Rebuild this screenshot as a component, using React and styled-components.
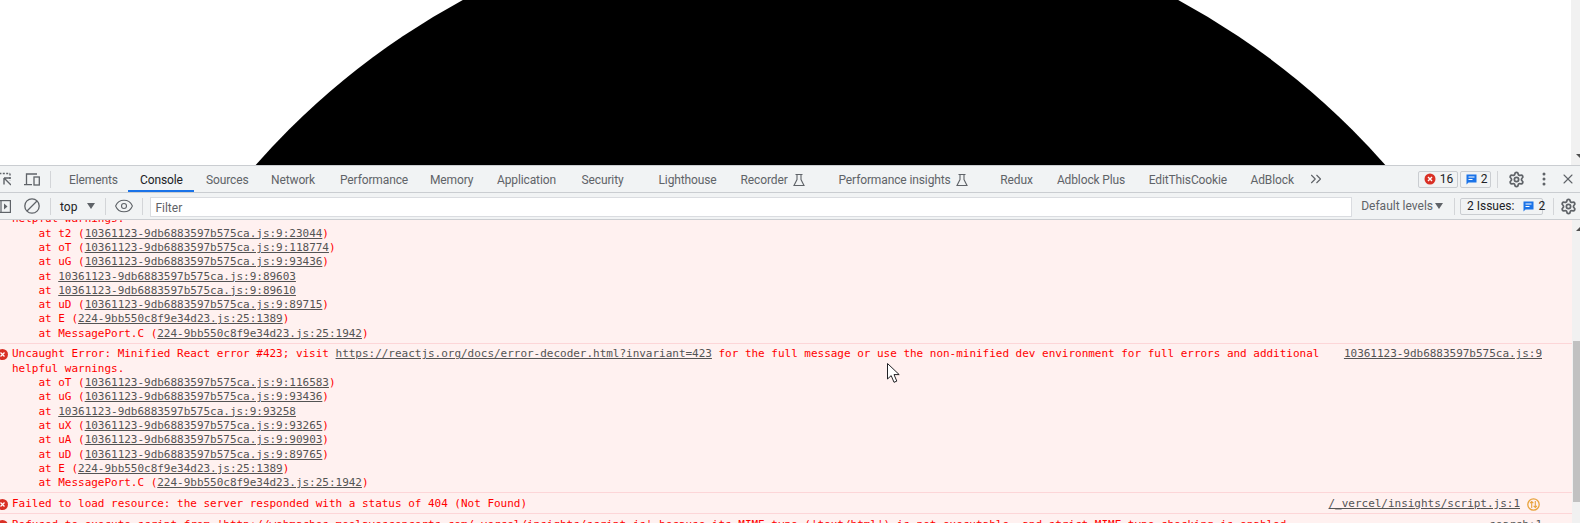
import React from "react";
import styled, { createGlobalStyle } from "styled-components";
import { Eye, Settings, X, ChevronsRight } from "lucide-react";

const GlobalStyle = createGlobalStyle`
  html, body {
    margin: 0;
    padding: 0;
    background: #fff;
    overflow: hidden;
  }
`;

const Page = styled.div`
  width: 1580px;
  height: 523px;
  position: relative;
  overflow: hidden;
  display: flex;
  flex-direction: column;
  font-family: Roboto, "Liberation Sans", sans-serif;
  font-size: 12px;
  color: #5f6368;
`;

const Hero = styled.div`
  height: 165px;
  display: flex;
  flex: none;
`;

const HeroCanvas = styled.svg`
  display: block;
  flex: 1;
  height: 165px;
`;

const Track = styled.div`
  width: ${(p) => p.$w}px;
  flex: none;
  background: #f1f1f1;
  overflow: hidden;
  display: flex;
  flex-direction: column;
`;

const DownArrow = styled.div`
  margin: auto 0 7px 5px;
  width: 0;
  height: 0;
  border-left: 4px solid transparent;
  border-right: 4px solid transparent;
  border-top: 4px solid #505050;
`;

const UpArrow = styled.div`
  margin: 7px 0 0 4px;
  width: 0;
  height: 0;
  border-left: 4px solid transparent;
  border-right: 4px solid transparent;
  border-bottom: 4px solid #505050;
`;

const Thumb = styled.div`
  margin-top: 110px;
  height: 161px;
  background: #c1c1c1;
  margin-left: 1px;
`;

const Bar = styled.div`
  height: 27px;
  box-sizing: border-box;
  flex: none;
  display: flex;
  align-items: center;
  background: #f1f3f4;
  border-bottom: 1px solid #cacdd1;
  ${(p) => p.$top && "border-top: 1px solid #cacdd1; height: 28px;"}
`;

const Slot = styled.span`
  display: flex;
  flex: none;
  margin-left: ${(p) => p.$ml || 0}px;
`;

const Divider = styled.span`
  flex: none;
  width: 1px;
  height: 17px;
  background: #d3d5d8;
  margin-left: ${(p) => p.$ml || 0}px;
`;

const Tab = styled.div`
  flex: none;
  width: ${(p) => p.$w}px;
  height: 26px;
  box-sizing: border-box;
  padding: 4px 0 0 12px;
  display: flex;
  align-items: center;
  gap: 5px;
  white-space: nowrap;
  letter-spacing: -0.12px;
  color: ${(p) => (p.$active ? "#202124" : "#5f6368")};
  border-bottom: 2px solid ${(p) => (p.$active ? "#1a73e8" : "transparent")};
`;

const CountBox = styled.div`
  flex: none;
  box-sizing: border-box;
  width: ${(p) => p.$w}px;
  height: 17px;
  margin-left: ${(p) => p.$ml || 0}px;
  padding-left: ${(p) => p.$pl || 0}px;
  display: flex;
  align-items: center;
  gap: 4px;
  white-space: nowrap;
  border: 1px solid #cacdd1;
  border-radius: 2px;
  color: #202124;
`;

const SelectLabel = styled.span`
  flex: none;
  margin-left: ${(p) => p.$ml || 0}px;
  padding-top: ${(p) => p.$pt || 0}px;
  color: ${(p) => p.$color || "#5f6368"};
  white-space: nowrap;
`;

const Caret = styled.span`
  flex: none;
  margin-left: ${(p) => p.$ml}px;
  width: 0;
  height: 0;
  border-left: 4px solid transparent;
  border-right: 4px solid transparent;
  border-top: 6px solid #5f6368;
`;

const FilterInput = styled.div`
  flex: 1;
  box-sizing: border-box;
  height: 20px;
  margin: 1px 0 0 7px;
  padding: 2px 0 0 4px;
  display: flex;
  align-items: center;
  background: #fff;
  border: 1px solid #dadce0;
  color: #5f6368;
`;

const ConsoleArea = styled.div`
  flex: 1;
  min-height: 0;
  display: flex;
`;

const Messages = styled.div`
  flex: 1;
  min-width: 0;
  overflow: hidden;
  background: #fff1f0;
  font-family: "DejaVu Sans Mono", "Liberation Mono", monospace;
  font-size: 11px;
  line-height: 14.3px;
  letter-spacing: -0.02px;
  color: #f00;
`;

const Message = styled.div`
  display: flex;
  padding: 3.5px 30px 2px 0;
  border-bottom: 1px solid #fdd6d8;
  &:first-child {
    margin-top: -11.2px;
  }
`;

const ErrorDot = styled.svg`
  flex: none;
  width: 11px;
  height: 11px;
  margin: 2px 4px 0 -3px;
  visibility: ${(p) => (p.$hidden ? "hidden" : "visible")};
`;

const Body = styled.div`
  flex: 1;
  min-width: 0;
`;

const Head = styled.div`
  display: flex;
  align-items: flex-start;
`;

const HeadText = styled.div`
  flex: 1;
  min-width: 0;
  white-space: ${(p) => (p.$nowrap ? "nowrap" : "normal")};
`;

const Source = styled.div`
  flex: none;
  margin-left: 20px;
  display: flex;
  align-items: center;
  color: #545454;
  text-decoration: underline;
`;

const Plain = styled.span`
  color: #545454;
  text-decoration: underline;
`;

const NetIcon = styled.svg`
  flex: none;
  width: 13px;
  height: 13px;
  margin: 0 2px 0 7px;
`;

const StackRow = styled.div`
  white-space: pre;
`;

const Pointer = styled.svg`
  position: absolute;
  left: 887px;
  top: 363px;
  width: 13px;
  height: 20px;
`;

const tabs = [
  ["Elements", 71],
  ["Console", 66, true],
  ["Sources", 65],
  ["Network", 69],
  ["Performance", 90],
  ["Memory", 67],
  ["Application", 84.5],
  ["Security", 77],
  ["Lighthouse", 82],
  ["Recorder", 98, false, true],
  ["Performance insights", 161.8, false, true],
  ["Redux", 56.6],
  ["Adblock Plus", 91.8],
  ["EditThisCookie", 101.8],
  ["AdBlock", 67.3],
];

const MAIN = "10361123-9db6883597b575ca.js:9:";
const SCHED = "224-9bb550c8f9e34d23.js:25:";

const stackOne = [
  ["t2", MAIN + "23044"],
  ["oT", MAIN + "118774"],
  ["uG", MAIN + "93436"],
  [null, MAIN + "89603"],
  [null, MAIN + "89610"],
  ["uD", MAIN + "89715"],
  ["E", SCHED + "1389"],
  ["MessagePort.C", SCHED + "1942"],
];

const stackTwo = [
  ["oT", MAIN + "116583"],
  ["uG", MAIN + "93436"],
  [null, MAIN + "93258"],
  ["uX", MAIN + "93265"],
  ["uA", MAIN + "90903"],
  ["uD", MAIN + "89765"],
  ["E", SCHED + "1389"],
  ["MessagePort.C", SCHED + "1942"],
];

const Stack = ({ rows }) =>
  rows.map(([name, loc], i) => (
    <StackRow key={i}>
      {name ? (
        <>
          {"    at " + name + " ("}
          <Plain>{loc}</Plain>)
        </>
      ) : (
        <>
          {"    at "}
          <Plain>{loc}</Plain>
        </>
      )}
    </StackRow>
  ));

const Dot = ({ hidden }) => (
  <ErrorDot viewBox="0 0 11 11" $hidden={hidden}>
    <circle cx="5.5" cy="5.5" r="5.5" fill="#d93025" />
    <path d="M3.5 3.5l4 4M7.5 3.5l-4 4" stroke="#fff" strokeWidth="1.3" />
  </ErrorDot>
);

const Flask = () => (
  <svg width="12" height="14" viewBox="0 0 12 14" fill="none" stroke="#5f6368" strokeWidth="1.1">
    <path d="M2.5 1.5h7M4 1.5v5L1 12.5h10L8 6.5v-5" />
  </svg>
);

const MsgIcon = () => (
  <svg width="11" height="11" viewBox="0 0 11 11">
    <path d="M0.5 0.5h10v8H2.5l-2 2z" fill="#1a73e8" />
    <path d="M2.5 3h6M2.5 5.5h4" stroke="#fff" strokeWidth="1" />
  </svg>
);

export default function App() {
  return (
    <Page>
      <GlobalStyle />
      <Hero>
        <HeroCanvas viewBox="0 0 1571 165">
          <circle cx="820.5" cy="661.5" r="752" fill="#000" />
        </HeroCanvas>
        <Track $w={9}>
          <DownArrow />
        </Track>
      </Hero>

      <Bar $top>
        <Slot $ml={-5}>
          <svg width="16" height="16" viewBox="0 0 16 16" fill="none" stroke="#5f6368" strokeWidth="1.4">
            <path d="M1 2.5h14M15 2.5v7" strokeDasharray="2 1.4" />
            <path d="M9 7h6.5M9 7v6.5M9 7l7 7" />
          </svg>
        </Slot>
        <Slot $ml={13}>
          <svg width="16" height="13" viewBox="0 0 16 13" fill="none" stroke="#5f6368" strokeWidth="1.3">
            <path d="M2.5 11V1h10.5M0 11.7h8" />
            <rect x="10" y="4" width="5.3" height="8" />
          </svg>
        </Slot>
        <Divider $ml={10} />
        <Slot $ml={6}>
          {tabs.map(([label, w, active, flask]) => (
            <Tab key={label} $w={w} $active={active}>
              {label}
              {flask && <Flask />}
            </Tab>
          ))}
        </Slot>
        <Slot $ml={1}>
          <ChevronsRight size={18} strokeWidth={1.5} color="#5f6368" />
        </Slot>
        <CountBox $w={40} $ml={93} $pl={5}>
          <svg width="12" height="12" viewBox="0 0 12 12">
            <circle cx="6" cy="6" r="5.5" fill="#d93025" />
            <path d="M4 4l4 4M8 4l-4 4" stroke="#fff" strokeWidth="1.4" />
          </svg>
          <span>16</span>
        </CountBox>
        <CountBox $w={31} $ml={2} $pl={5}>
          <MsgIcon />
          <span>2</span>
        </CountBox>
        <Divider $ml={6} />
        <Slot $ml={10}>
          <Settings size={17} strokeWidth={2.5} color="#5f6368" />
        </Slot>
        <Slot $ml={17}>
          <svg width="4" height="14" viewBox="0 0 4 14" fill="#5f6368">
            <circle cx="2" cy="2" r="1.5" />
            <circle cx="2" cy="7" r="1.5" />
            <circle cx="2" cy="12" r="1.5" />
          </svg>
        </Slot>
        <Slot $ml={14}>
          <X size={16} strokeWidth={1.6} color="#5f6368" />
        </Slot>
      </Bar>

      <Bar>
        <Slot $ml={-5}>
          <svg width="16" height="13" viewBox="0 0 16 13" fill="none" stroke="#5f6368" strokeWidth="1.2">
            <rect x="0.6" y="0.6" width="14.8" height="11.8" />
            <path d="M6 0.6v11.8" />
            <path d="M9 3.5l3.5 3-3.5 3z" fill="#5f6368" stroke="none" />
          </svg>
        </Slot>
        <Slot $ml={13}>
          <svg width="16" height="16" viewBox="0 0 16 16" fill="none" stroke="#5f6368" strokeWidth="1.3">
            <circle cx="8" cy="8" r="7.2" />
            <path d="M3 13L13 3" />
          </svg>
        </Slot>
        <Divider $ml={10} />
        <SelectLabel $ml={9} $pt={1} $color="#202124">
          top
        </SelectLabel>
        <Caret $ml={10} />
        <Divider $ml={10} />
        <Slot $ml={8}>
          <Eye size={20} strokeWidth={1.3} color="#5f6368" />
        </Slot>
        <Divider $ml={8} />
        <FilterInput>Filter</FilterInput>
        <SelectLabel $ml={9}>Default levels</SelectLabel>
        <Caret $ml={2} />
        <Divider $ml={11} />
        <CountBox $w={83} $ml={5} $pl={6}>
          <span>2 Issues:</span>
          <Slot $ml={5}>
            <MsgIcon />
          </Slot>
          <span>2</span>
        </CountBox>
        <Divider $ml={10} />
        <Slot $ml={6}>
          <Settings size={17} strokeWidth={2.5} color="#5f6368" />
        </Slot>
        <Slot $ml={3} />
      </Bar>

      <ConsoleArea>
        <Messages>
          <Message>
            <Dot hidden />
            <Body>
              <HeadText>helpful warnings.</HeadText>
              <Stack rows={stackOne} />
            </Body>
          </Message>
          <Message>
            <Dot />
            <Body>
              <Head>
                <HeadText>
                  Uncaught Error: Minified React error #423; visit{" "}
                  <Plain>https://reactjs.org/docs/error-decoder.html?invariant=423</Plain> for the full
                  message or use the non-minified dev environment for full errors and additional helpful
                  warnings.
                </HeadText>
                <Source>10361123-9db6883597b575ca.js:9</Source>
              </Head>
              <Stack rows={stackTwo} />
            </Body>
          </Message>
          <Message>
            <Dot />
            <Body>
              <Head>
                <HeadText>Failed to load resource: the server responded with a status of 404 (Not Found)</HeadText>
                <Source>
                  /_vercel/insights/script.js:1
                  <NetIcon viewBox="0 0 13 13" fill="none" stroke="#e8a33d">
                    <circle cx="6.5" cy="6.5" r="5.7" strokeWidth="1.3" />
                    <path d="M4.7 10V3.5M3 5.2l1.7-1.7 1.7 1.7M8.3 3v6.5M6.6 7.8l1.7 1.7L10 7.8" strokeWidth="1.1" />
                  </NetIcon>
                </Source>
              </Head>
            </Body>
          </Message>
          <Message>
            <Dot />
            <Body>
              <Head>
                <HeadText $nowrap>
                  Refused to execute script from 'http://webmachos.moolavesconcerts.com/_vercel/insights/script.js'
                  because its MIME type ('text/html') is not executable, and strict MIME type checking is enabled.
                </HeadText>
                <Source>search:1</Source>
              </Head>
            </Body>
          </Message>
        </Messages>
        <Track $w={8}>
          <UpArrow />
          <Thumb />
        </Track>
      </ConsoleArea>

      <Pointer viewBox="0 0 13 20">
        <path d="M0.5 0.5V16L4.2 12.6L7 19.3L9.8 18.1L7 11.6H12.2Z" fill="#fff" stroke="#202124" strokeWidth="1" />
      </Pointer>
    </Page>
  );
}
